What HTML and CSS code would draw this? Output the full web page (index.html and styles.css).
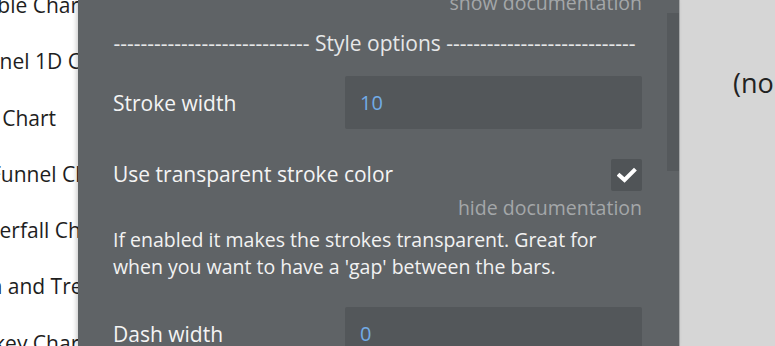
FILE: index.html
```html
<!DOCTYPE html>
<html>
<head>
<meta charset="utf-8">
<link rel="stylesheet" href="styles.css">
</head>
<body>
<div class="screen">
  <div class="list">
    <div class="item i1">Bubble Chart</div>
    <div class="item i2">Funnel 1D Chart</div>
    <div class="item i3">Pie Chart</div>
    <div class="item i4">Funnel Chart</div>
    <div class="item i5">Waterfall Chart</div>
    <div class="item i6">Sun and Treemap</div>
    <div class="item i7">Sankey Chart</div>
  </div>
  <div class="panel">
    <div class="content">
      <div class="doclink">show documentation</div>
      <div class="section">----------------------------- Style options ----------------------------</div>
      <div class="row row-first">
        <div class="label">Stroke width</div>
        <div class="input">10</div>
      </div>
      <div class="row row-check">
        <div class="label">Use transparent stroke color</div>
        <div class="checkbox">
          <svg width="20" height="16" viewBox="0 0 20 16"><polyline points="2.5,8.5 7.5,13 17,3.5" fill="none" stroke="#ffffff" stroke-width="4" stroke-linecap="square" stroke-linejoin="miter"/></svg>
        </div>
      </div>
      <div class="doclink doclink-hide">hide documentation</div>
      <div class="doc">If enabled it makes the strokes transparent. Great for when you want to have a 'gap' between the bars.</div>
      <div class="row row-dash">
        <div class="label">Dash width</div>
        <div class="input">0</div>
      </div>
    </div>
    <div class="scrollbar"></div>
  </div>
  <div class="preview">(no data)</div>
</div>
</body>
</html>
```
FILE: styles.css
```css
html, body {
  margin: 0;
  padding: 0;
}
body {
  width: 775px;
  height: 346px;
  overflow: hidden;
  background: #ffffff;
  font-family: "Open Sans", "Liberation Sans", sans-serif;
}
.screen {
  display: flex;
  height: 346px;
}
.list {
  width: 78px;
  flex: none;
  overflow: hidden;
  background: #ffffff;
}
.item {
  white-space: nowrap;
  font-size: 21px;
  line-height: 56.3px;
  color: #1e1e1e;
}
.i1 { margin-top: -23px; margin-left: -42px; }
.i2 { margin-left: -37px; }
.i3 { margin-left: -33px; }
.i4 { margin-left: -10px; }
.i5 { margin-left: -39px; }
.i6 { margin-left: -35px; }
.i7 { margin-left: -42px; }
.panel {
  position: relative;
  width: 601px;
  flex: none;
  background: #5f6366;
  border-right: 1px solid #a7a9aa;
  box-shadow: -2px 0 4px rgba(0, 0, 0, 0.18);
  overflow: hidden;
}
.content {
  width: 529px;
  margin-left: 35px;
  margin-top: -10px;
  color: #f2f2f2;
}
.doclink {
  text-align: right;
  font-size: 19.5px;
  line-height: 26px;
  color: #a4a7a9;
}
.section {
  margin-top: 13px;
  font-size: 21px;
  line-height: 28px;
  color: #e6e7e8;
  text-align: center;
  white-space: nowrap;
  overflow: hidden;
  margin-left: -6px;
}
.row {
  display: flex;
  align-items: center;
  justify-content: space-between;
}
.row-first { margin-top: 19px; }
.row-check { margin-top: 30px; }
.row-dash { margin-top: 27px; }
.label {
  font-size: 21px;
  line-height: 28px;
  color: #f4f4f4;
}
.row-check .label {
  margin-top: -2px;
}
.input {
  width: 282px;
  height: 53px;
  padding-left: 15px;
  background: #53575a;
  border-radius: 2px;
  color: #72abe6;
  font-size: 20px;
  line-height: 53px;
}
.checkbox {
  width: 31px;
  height: 32px;
  background: #505457;
  border-radius: 2px;
  display: flex;
  align-items: center;
  justify-content: center;
}
.doclink-hide {
  margin-top: 4px;
}
.doc {
  margin-top: 5px;
  width: 500px;
  font-size: 19.5px;
  line-height: 27px;
  color: #f2f2f2;
}
.scrollbar {
  position: absolute;
  left: 589px;
  top: 13px;
  width: 12px;
  height: 158px;
  background: #55595c;
}
.preview {
  flex: 1;
  background: #d6d6d6;
  padding-left: 53px;
  padding-top: 64px;
  font-size: 27px;
  line-height: 38px;
  color: #222222;
  white-space: nowrap;
  overflow: hidden;
}
```
